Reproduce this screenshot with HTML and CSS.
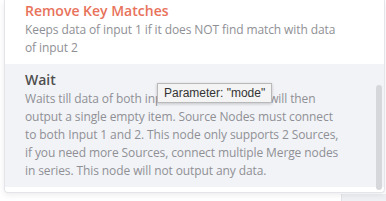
FILE: index.html
```html
<!DOCTYPE html>
<html lang="en">
<head>
    <meta charset="UTF-8" />
    <meta name="viewport" content="width=device-width, initial-scale=1.0" />
    <title>Merge Mode</title>
    <link rel="stylesheet" href="styles.css">
</head>
<body>

    <div class="dropdown">
        <ul class="option-list">
            <li class="option">
                <div class="option-name accent">Remove Key Matches</div>
                <div class="option-desc">Keeps data of input 1 if it does NOT find match with data of&nbsp;input 2</div>
            </li>
            <li class="option hovered">
                <div class="option-name">Wait</div>
                <div class="option-desc">Waits till data of both inputs is available and will then output a single empty item. Source Nodes must connect to both Input 1 and 2. This node only supports 2 Sources, if you need more Sources, connect multiple Merge nodes in series. This node will not output any data.</div>
            </li>
        </ul>
        <div class="scroll-thumb"></div>
        <div class="tooltip">Parameter: "mode"</div>
    </div>

    <div class="below">
        <div class="below-fill"></div>
        <div class="below-side"></div>
    </div>

</body>
</html>
```

FILE: styles.css
```css
/* Global styles */
body {
    margin: 0;
    background: #fff;
    font-family: "Open Sans", sans-serif;
    overflow: hidden;
}

.dropdown {
    position: relative;
    margin: 0 1px 0 4px;
    height: 193px;
    box-sizing: border-box;
    background: #fff;
    border: 1px solid #e4e5ea;
    border-top: none;
    border-radius: 0 0 4px 4px;
    box-shadow: 0 2px 6px rgba(0, 0, 0, 0.08);
    overflow: hidden;
}

.option-list {
    list-style: none;
    margin: -5px 0 0 0;
    padding: 0;
}

.option {
    padding: 5px 40px 7px 20px;
}

.option.hovered {
    background-color: #f2f3f7;
}

.option-name {
    font-size: 14px;
    line-height: 21px;
    font-weight: 600;
    color: #4f4f4f;
}

.option-name.accent {
    color: #e8725b;
}

.option-desc {
    font-size: 12px;
    line-height: 18px;
    letter-spacing: -0.1px;
    color: #8f9095;
}

.scroll-thumb {
    position: absolute;
    top: 85px;
    right: 2px;
    width: 6px;
    height: 105px;
    border-radius: 3px;
    background-color: #d6d7db;
}

/* native-looking title tooltip */
.tooltip {
    position: absolute;
    top: 83px;
    left: 152px;
    padding: 0 6px;
    height: 20px;
    line-height: 19px;
    box-sizing: border-box;
    font-family: "Liberation Sans", Arial, sans-serif;
    font-size: 12px;
    color: #333;
    background: #f4f4f4;
    border: 1px solid #b9b9b9;
    box-shadow: 0 1px 3px rgba(0, 0, 0, 0.2);
    white-space: nowrap;
}

.below {
    display: flex;
    margin-top: 1px;
    height: 8px;
}

.below-fill {
    flex: 1;
}

.below-side {
    width: 44px;
    background-color: #eef0f4;
    border-left: 1px solid #e2e3e8;
}
```
